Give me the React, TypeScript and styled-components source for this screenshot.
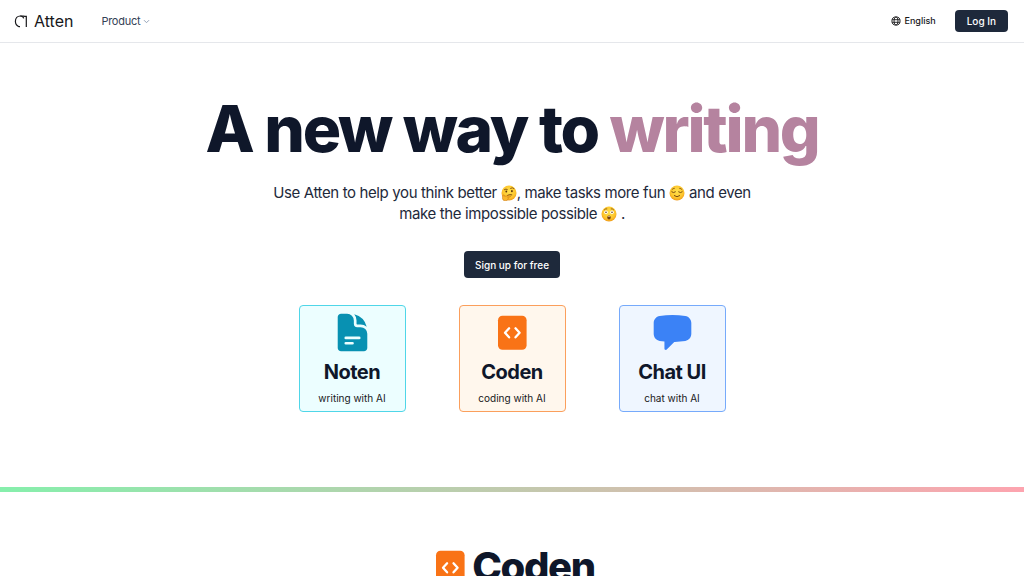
import React from "react";
import styled, { createGlobalStyle } from "styled-components";

const GlobalStyle = createGlobalStyle`
  *, *::before, *::after { box-sizing: border-box; }
  body {
    margin: 0;
    background: #fff;
    color: #0f172a;
    font-family: Inter, "Liberation Sans", sans-serif;
    overflow-x: hidden;
  }
  h1, h2, p { margin: 0; }
  button { font-family: inherit; border: 0; cursor: pointer; }
  svg { display: block; flex: none; }
`;

const Header = styled.header`
  display: flex;
  align-items: center;
  height: 43px;
  padding: 0 16px 0 14px;
  border-bottom: 1px solid #e5e7eb;
`;

const Brand = styled.a`
  display: flex;
  align-items: center;
  gap: 6px;
  color: #18181b;
  font-size: 16px;
  line-height: 20px;
  font-weight: 400;
  text-decoration: none;
`;

const Nav = styled.nav`
  margin-left: 28px;
  flex: 1;
`;

const MenuButton = styled.button`
  display: flex;
  align-items: center;
  gap: 3px;
  padding: 0;
  background: none;
  color: #334155;
  font-size: 11px;
  line-height: 16px;
  letter-spacing: -0.025em;
`;

const Actions = styled.div`
  display: flex;
  align-items: center;
  gap: 19px;
`;

const LanguageButton = styled.button`
  display: flex;
  align-items: center;
  gap: 3px;
  padding: 0;
  background: none;
  color: #18181b;
  font-size: 9px;
  line-height: 16px;
  font-weight: 500;
`;

const PrimaryButton = styled.button<{ $large?: boolean }>`
  padding: ${(p) => (p.$large ? "6px 11px 5px" : "3px 12px")};
  border-radius: 4px;
  background: #1e293b;
  color: #fff;
  font-size: 10px;
  line-height: 16px;
  font-weight: 500;
`;

const Hero = styled.section`
  display: flex;
  flex-direction: column;
  align-items: center;
  padding: 51px 16px 75px;
`;

const Title = styled.h1`
  font-size: 64px;
  line-height: 70px;
  font-weight: 800;
  letter-spacing: -0.035em;
  text-align: center;
`;

const Accent = styled.span`
  color: #b5839f;
`;

const Lead = styled.p`
  max-width: 512px;
  margin-top: 18px;
  color: #1e293b;
  font-size: 15px;
  line-height: 21px;
  letter-spacing: -0.025em;
  text-align: center;
`;

const EmojiSvg = styled.svg`
  display: inline-block;
  width: 16px;
  height: 16px;
  vertical-align: -3px;
`;

const HeroAction = styled.div`
  margin-top: 27px;
`;

const Cards = styled.div`
  display: flex;
  gap: 53px;
  margin-top: 27px;
`;

const Card = styled.a<{ $border: string; $fill: string }>`
  display: flex;
  flex-direction: column;
  align-items: center;
  width: 107px;
  height: 107px;
  padding-top: 5px;
  border: 1px solid ${(p) => p.$border};
  border-radius: 4px;
  background: ${(p) => p.$fill};
  color: #0f172a;
  text-decoration: none;
`;

const CardTitle = styled.h2`
  margin-top: 4px;
  font-size: 20px;
  line-height: 28px;
  font-weight: 700;
  letter-spacing: -0.025em;
`;

const CardText = styled.p`
  margin-top: 4px;
  color: #18181b;
  font-size: 10px;
  line-height: 16px;
`;

const Divider = styled.div`
  height: 5px;
  background: linear-gradient(to right, #86efac, #fda4af);
`;

const Product = styled.section`
  display: flex;
  justify-content: center;
  align-items: center;
  padding: 52px 16px;
`;

const ProductTitle = styled.h2`
  font-size: 40px;
  line-height: 46px;
  font-weight: 800;
  letter-spacing: -0.035em;
`;

function Logo() {
  return (
    <svg width="14" height="14" viewBox="0 0 14 14" fill="none" stroke="#18181b" strokeWidth="1.2">
      <path d="M6 12.7H5C2.8 11.8 1.4 9.8 1.4 7.3C1.4 4.2 3.5 2 6.3 2C8.2 2 9.3 2.9 9.7 4.4" />
      <path d="M6.3 2C8.6 2 10 2.4 12.3 2.4M12.3 1.8V12.9" />
    </svg>
  );
}

function Chevron() {
  return (
    <svg width="7" height="7" viewBox="0 0 7 7" fill="none" stroke="#94a3b8">
      <path d="M1 2.2L3.5 4.7L6 2.2" />
    </svg>
  );
}

function Globe() {
  return (
    <svg width="10" height="10" viewBox="0 0 10 10" fill="none" stroke="#18181b" strokeWidth="0.9">
      <circle cx="5" cy="5" r="4.1" />
      <ellipse cx="5" cy="5" rx="2" ry="4.1" />
      <path d="M1.1 3.7H8.9M1.1 6.3H8.9" />
    </svg>
  );
}

function DocumentIcon() {
  return (
    <svg width="43" height="43" viewBox="0 0 24 24" fill="#0891b2">
      <path
        fillRule="evenodd"
        d="M5.625 1.5c-1.036 0-1.875.84-1.875 1.875v17.25c0 1.035.84 1.875 1.875 1.875h12.75c1.035 0 1.875-.84 1.875-1.875V12.75A3.75 3.75 0 0016.5 9h-1.875a1.875 1.875 0 01-1.875-1.875V5.25A3.75 3.75 0 009 1.5H5.625zM7.5 15a.75.75 0 01.75-.75h7.5a.75.75 0 010 1.5h-7.5A.75.75 0 017.5 15zm.75 2.25a.75.75 0 000 1.5H12a.75.75 0 000-1.5H8.25z"
      />
      <path d="M12.971 1.816A5.23 5.23 0 0114.25 5.25v1.875c0 .207.168.375.375.375H16.5a5.23 5.23 0 013.434 1.279 9.768 9.768 0 00-6.963-6.963z" />
    </svg>
  );
}

function CodeIcon() {
  return (
    <svg width="43" height="43" viewBox="0 0 43 43" fill="none">
      <rect x="7" y="4.8" width="28.6" height="34" rx="4.5" fill="#f97316" />
      <path
        d="M18.1 17.3L14 21.8L18.1 26.3M24.5 17.3L28.6 21.8L24.5 26.3"
        stroke="#fff"
        strokeWidth="2.3"
        strokeLinecap="round"
        strokeLinejoin="round"
      />
    </svg>
  );
}

function ChatIcon() {
  return (
    <svg width="43" height="43" viewBox="0 0 24 24" fill="#3b82f6">
      <path d="M4.848 2.771A49.144 49.144 0 0112 2.25c2.43 0 4.817.178 7.152.52 1.978.292 3.348 2.024 3.348 3.97v6.02c0 1.946-1.37 3.678-3.348 3.97-1.94.284-3.916.455-5.922.505a.39.39 0 00-.266.112L8.78 21.53A.75.75 0 017.5 21v-3.955a48.842 48.842 0 01-2.652-.316c-1.978-.29-3.348-2.024-3.348-3.97V6.741c0-1.946 1.37-3.68 3.348-3.97z" />
    </svg>
  );
}

function FaceFill({ id }: { id: string }) {
  return (
    <>
      <defs>
        <radialGradient id={id} cx="0.5" cy="0.4" r="0.6">
          <stop offset="0" stopColor="#ffe14d" />
          <stop offset="0.7" stopColor="#fdc52c" />
          <stop offset="1" stopColor="#ef9a1a" />
        </radialGradient>
      </defs>
      <circle cx="8" cy="8" r="7.5" fill={`url(#${id})`} />
    </>
  );
}

function ThinkingFace() {
  return (
    <EmojiSvg viewBox="0 0 16 16" fill="none" role="img" aria-label="thinking face">
      <FaceFill id="thinking" />
      <g stroke="#6b3d0c" strokeLinecap="round">
        <path d="M3.4 4.6Q5 3.5 6.4 4.5M9.6 3.3Q11.4 2 13 3.5" strokeWidth="0.8" />
        <path d="M6.5 10.3Q8.5 9.1 10.8 9.8" strokeWidth="0.9" />
      </g>
      <ellipse cx="5.3" cy="6.5" rx="0.9" ry="1.1" fill="#5b320a" />
      <ellipse cx="10.9" cy="6.2" rx="0.9" ry="1.1" fill="#5b320a" />
      <path
        d="M2.1 10.1C2.8 9.5 3.6 10.2 3.6 11.2L8.8 10.7C9.9 10.7 9.9 11.9 8.9 12L6.8 12.4C8 13.7 6.8 15.8 4.4 15.8C2 15.8 1.2 14.2 1.5 12.4Z"
        fill="#f9b62b"
        stroke="#cf7810"
        strokeWidth="0.6"
      />
    </EmojiSvg>
  );
}

function RelievedFace() {
  return (
    <EmojiSvg viewBox="0 0 16 16" fill="none" role="img" aria-label="relieved face">
      <FaceFill id="relieved" />
      <g stroke="#6b3d0c" strokeLinecap="round">
        <path d="M3 4.5Q3.8 3.3 5.4 3.3M10.6 3.3Q12.2 3.3 13 4.5" strokeWidth="0.7" />
        <path d="M2.8 6.9Q4.5 8.5 6.4 6.9M9.6 6.9Q11.5 8.5 13.2 6.9" strokeWidth="0.9" />
        <path d="M5.3 10.7Q8 13 10.7 10.7" strokeWidth="0.9" />
      </g>
    </EmojiSvg>
  );
}

function AstonishedFace() {
  return (
    <EmojiSvg viewBox="0 0 16 16" fill="none" role="img" aria-label="astonished face">
      <FaceFill id="astonished" />
      <path
        d="M3.4 3.7Q4.4 2.5 5.8 2.8M10.2 2.8Q11.6 2.5 12.6 3.7"
        stroke="#6b3d0c"
        strokeWidth="0.7"
        strokeLinecap="round"
      />
      <circle cx="5" cy="6.3" r="1.8" fill="#fff" />
      <circle cx="11" cy="6.3" r="1.8" fill="#fff" />
      <circle cx="5" cy="6.3" r="0.8" fill="#5b320a" />
      <circle cx="11" cy="6.3" r="0.8" fill="#5b320a" />
      <ellipse cx="8" cy="11.6" rx="1.7" ry="2" fill="#74400f" />
      <path d="M7 10.4Q8 9.8 9 10.4V10.8H7Z" fill="#fff" />
    </EmojiSvg>
  );
}

export default function App() {
  return (
    <>
      <GlobalStyle />
      <Header>
        <Brand href="#">
          <Logo />
          Atten
        </Brand>
        <Nav>
          <MenuButton type="button">
            Product
            <Chevron />
          </MenuButton>
        </Nav>
        <Actions>
          <LanguageButton type="button">
            <Globe />
            English
          </LanguageButton>
          <PrimaryButton type="button">Log In</PrimaryButton>
        </Actions>
      </Header>
      <main>
        <Hero>
          <Title>
            A new way to <Accent>writing</Accent>
          </Title>
          <Lead>
            Use Atten to help you think better <ThinkingFace />, make tasks more fun <RelievedFace /> and even
            <br />
            make the impossible possible <AstonishedFace /> .
          </Lead>
          <HeroAction>
            <PrimaryButton type="button" $large>
              Sign up for free
            </PrimaryButton>
          </HeroAction>
          <Cards>
            <Card href="#noten" $border="#4fd6e8" $fill="#ecfeff">
              <DocumentIcon />
              <CardTitle>Noten</CardTitle>
              <CardText>writing with AI</CardText>
            </Card>
            <Card href="#coden" $border="#fb9f5c" $fill="#fff7ed">
              <CodeIcon />
              <CardTitle>Coden</CardTitle>
              <CardText>coding with AI</CardText>
            </Card>
            <Card href="#chat" $border="#76aafb" $fill="#eff6ff">
              <ChatIcon />
              <CardTitle>Chat UI</CardTitle>
              <CardText>chat with AI</CardText>
            </Card>
          </Cards>
        </Hero>
        <Divider />
        <Product id="coden">
          <CodeIcon />
          <ProductTitle>Coden</ProductTitle>
        </Product>
      </main>
    </>
  );
}
